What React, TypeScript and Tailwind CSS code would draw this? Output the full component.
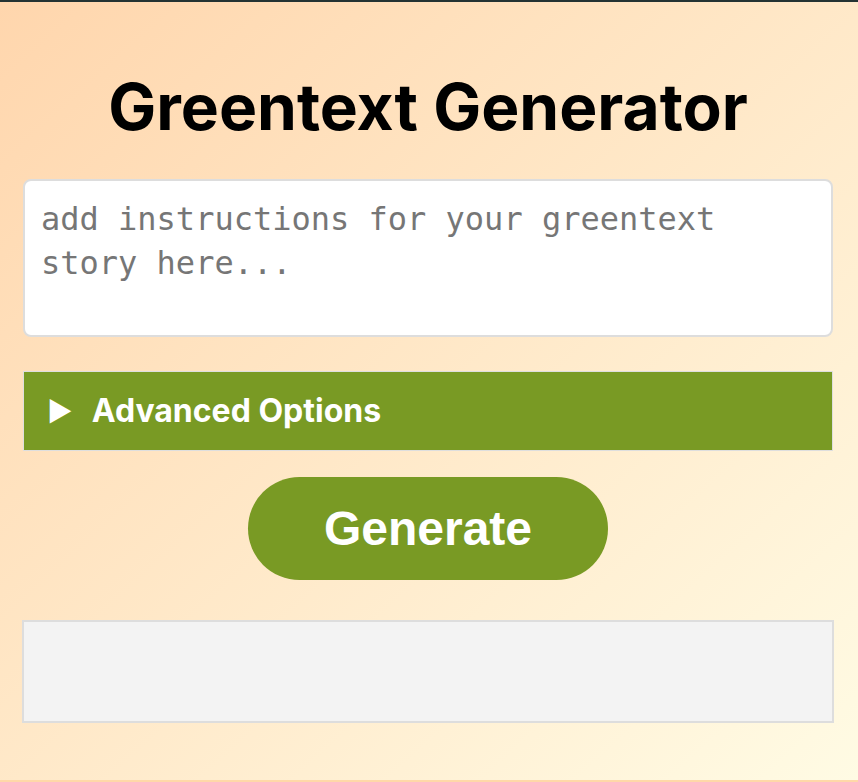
import React from 'react';

const App = () => {
  return (
    <div className="w-[858px] h-[782px] border-t-2 border-t-[#243333] border-b-2 border-b-[#ffd8a8] bg-gradient-to-br from-[#ffd6ad] to-[#fffbe4] overflow-hidden">
      <div className="pl-[22px] pr-[24px] flex flex-col">
        {/* Title */}
        <h1 className="mt-[66px] text-center text-[64px] leading-[78px] font-bold text-black font-['Inter',sans-serif]">
          Greentext Generator
        </h1>

        {/* Prompt */}
        <textarea
          className="mt-[33px] mx-px h-[158px] resize-none rounded-lg border-2 border-[#dddddd] bg-white px-4 py-4 text-[32px] leading-[44px] text-[#333] placeholder:text-[#767676] font-['DejaVu_Sans_Mono',monospace] outline-none"
          placeholder="add instructions for your greentext story here..."
        />

        {/* Advanced options */}
        <div className="mt-[34px] mx-px h-[80px] flex items-center gap-[19px] bg-[#799a24] border border-[#dedede] pl-[23px] text-white font-['Inter',sans-serif] font-bold">
          <span className="text-[27px] leading-none">▶</span>
          <span className="text-[32px] leading-none">Advanced Options</span>
        </div>

        {/* Generate */}
        <div className="mt-[26px] flex justify-center">
          <button className="w-[360px] h-[103px] rounded-full bg-[#799a24] text-white text-[48px] font-bold font-['Liberation_Sans',Arial,sans-serif]">
            Generate
          </button>
        </div>

        {/* Output */}
        <div className="mt-[40px] h-[103px] bg-[#f3f3f3] border-2 border-[#dddddd]"></div>
      </div>
    </div>
  );
};

export default App;
